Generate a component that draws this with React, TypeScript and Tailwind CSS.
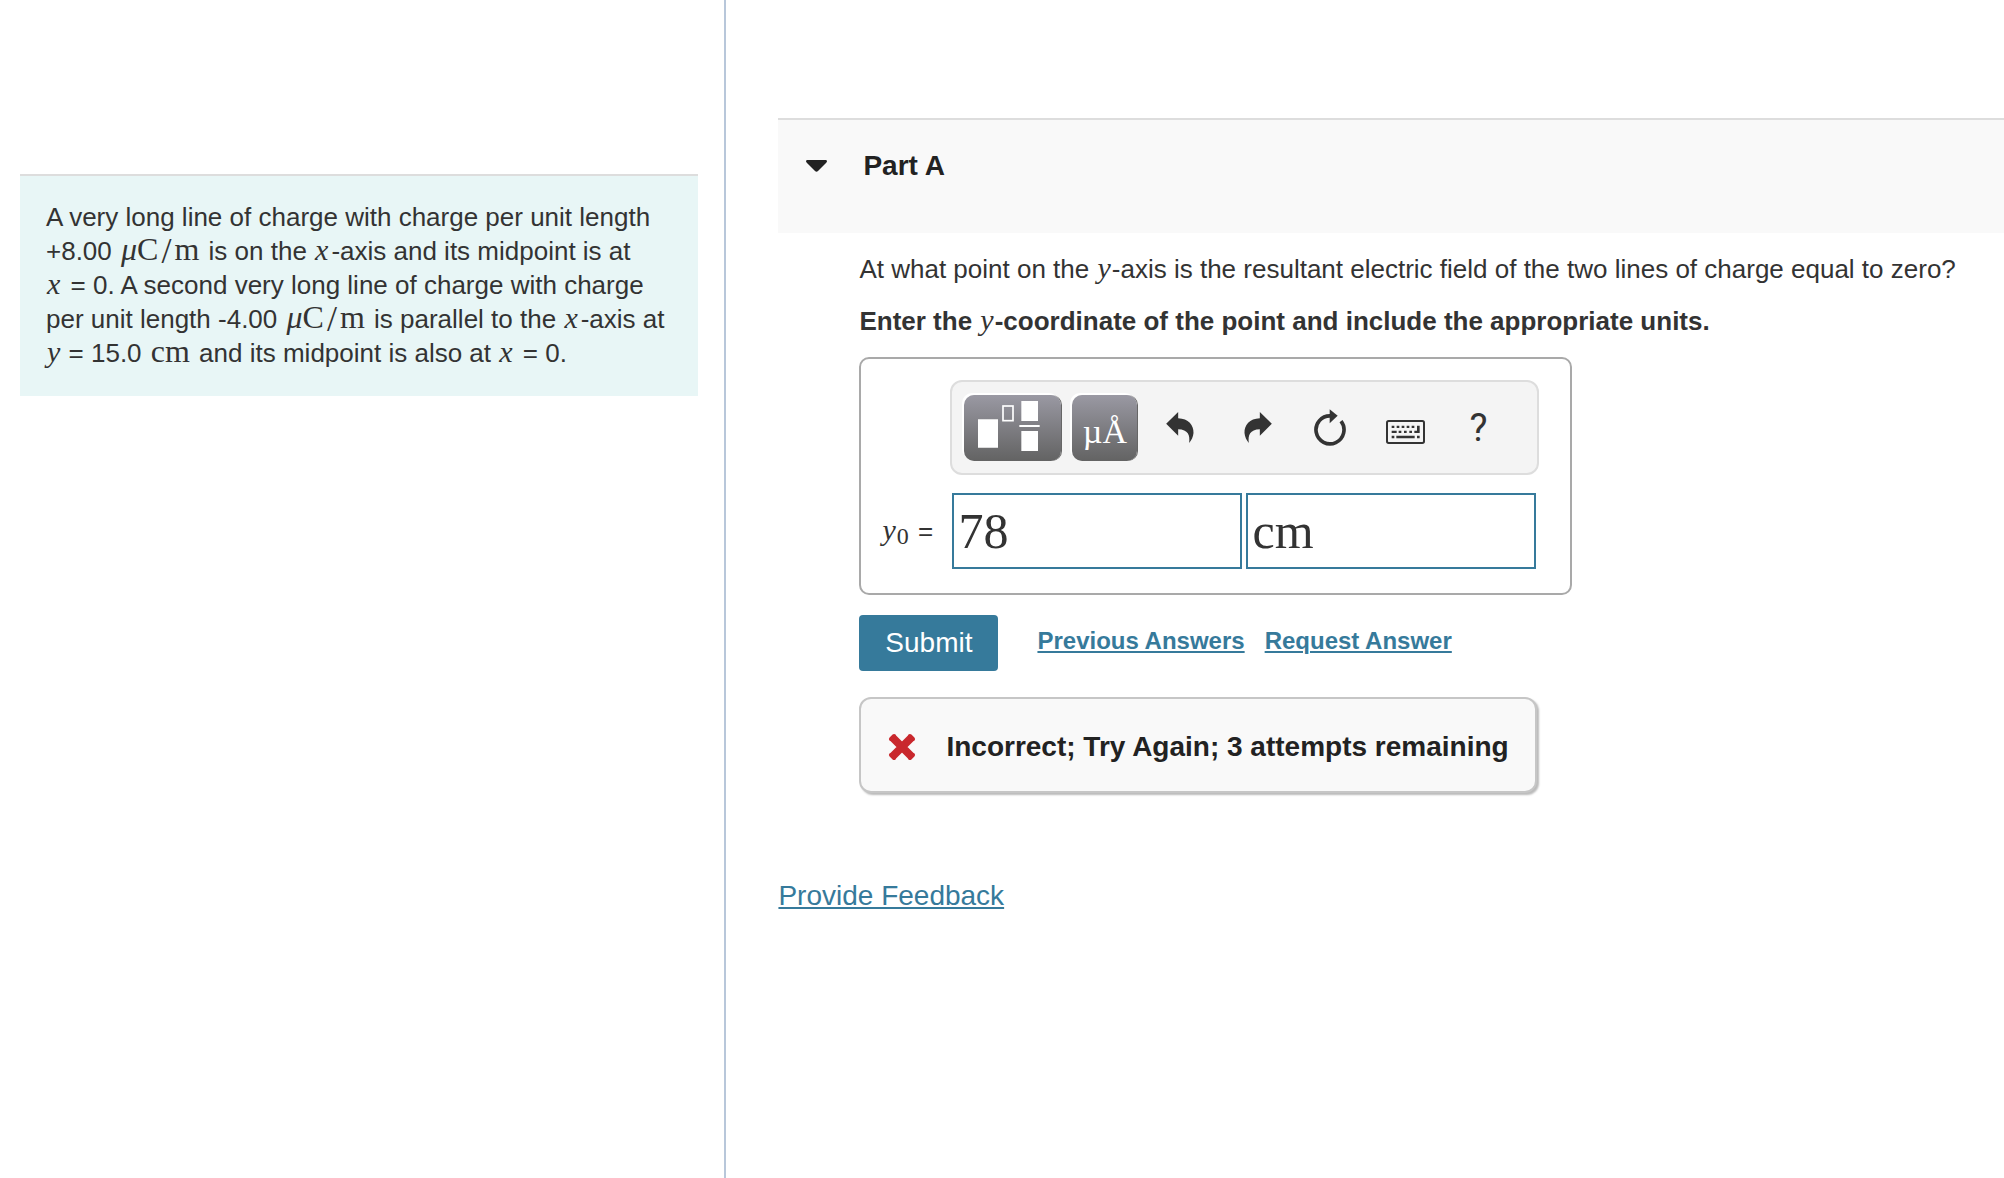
const X = () => (
  <i className="pl-px pr-[3px] font-['Liberation_Serif',serif] text-[30px] leading-[0px] font-normal">x</i>
);

const Y = () => (
  <i className="px-px font-['Liberation_Serif',serif] text-[30px] leading-[0px] font-normal">y</i>
);

const ChargeDensity = () => (
  <span className="px-0.5 font-['Liberation_Serif',serif] text-[32px] leading-[0px]">
    <i>μ</i>C<span className="px-[3px] align-[-3px] text-[36px] leading-[0px]">/</span>m
  </span>
);

const TemplateIcon = () => (
  <svg width="62" height="50" viewBox="0 0 186 150" aria-hidden="true">
    <path fill="#fff" d="M0 55h60v85H0zM130 0h50v60h-50zM124 72h61v6h-61zM130 90h50v60h-50z" />
    <rect x="75" y="15" width="30" height="44" fill="none" stroke="#fff" strokeWidth="5" />
  </svg>
);

const ArrowIcon = ({ flip }: { flip?: boolean }) => (
  <svg width="28" height="31" viewBox="0 0 83 93" className={flip ? "-scale-x-100" : ""} aria-hidden="true">
    <path fill="#333" d="M0 35 36 0v19c31 1 47 21 46 44-1 12-6 22-13 30 3-23-3-40-33-41v19z" />
  </svg>
);

const ResetIcon = () => (
  <svg width="32" height="37" viewBox="0 0 96 110" aria-hidden="true">
    <path fill="none" stroke="#333" strokeWidth="11" d="M81 36A42 42 0 1 1 50 20" />
    <path fill="#333" d="M47 0 71 20 47 42z" />
  </svg>
);

const KeyboardIcon = () => (
  <svg width="39" height="24" viewBox="0 0 117 72" aria-hidden="true">
    <rect x="3" y="3" width="111" height="66" rx="5" fill="none" stroke="#333" strokeWidth="6" />
    <path
      fill="#333"
      d="M17 17h8v7h-8zM32 17h8v7h-8zM47 17h8v7h-8zM62 17h8v7h-8zM77 17h8v7h-8zM93 17h8v22H85v-7h8zM17 32h15v7H17zM38 32h8v7h-8zM54 32h8v7h-8zM70 32h8v7h-8zM17 47h8v8h-8zM31 47h55v8H31zM93 47h8v8h-8z"
    />
  </svg>
);

const WrongIcon = () => (
  <svg width="28" height="28" viewBox="0 0 28 28" aria-hidden="true">
    <path stroke="#c9282d" strokeWidth="8" d="M4 4 24 24M24 4 4 24" />
    <path stroke="#c9282d" strokeWidth="4" strokeLinecap="round" d="M3 6 6 3M22 3 25 6M3 22 6 25M25 22 22 25" />
  </svg>
);

const keyClass =
  "flex items-center h-[66px] rounded-[10px] bg-linear-to-b from-[#9a99a3] to-[#636363] text-white shadow-[-2px_-2px_0_#fff,1px_0_0_#666]";
const inputClass =
  "h-[76px] min-w-0 flex-1 border-2 border-[#367a9b] bg-white px-1 font-['Liberation_Serif',serif] text-[50px] leading-none text-[#333] outline-none";
const linkClass = "text-[#367a9b] underline decoration-2 underline-offset-2";

const Problem = () => (
  <aside className="border-r-2 border-[#b8c7da] pl-5 pr-[26px] pt-[174px]">
    <div className="border-t-2 border-[#ddd] bg-[#e8f6f6] pl-[26px] pt-6 pb-[26px]">
      <p className="text-[26px] leading-[34px] whitespace-nowrap">
        A very long line of charge with charge per unit length
        <br />
        +8.00 <ChargeDensity /> is on the <X />-axis and its midpoint is at
        <br />
        <X /> = 0. A second very long line of charge with charge
        <br />
        per unit length -4.00 <ChargeDensity /> is parallel to the <X />-axis at
        <br />
        <Y /> = 15.0{" "}
        <span className="px-0.5 font-['Liberation_Serif',serif] text-[32px] leading-[0px]">cm</span> and its
        midpoint is also at <X /> = 0.
      </p>
    </div>
  </aside>
);

const AnswerBox = () => (
  <div className="mt-[19px] flex w-[713px] max-w-full flex-col rounded-[10px] border-2 border-[#a9a9a9] pt-[21px] pb-6 pl-5 pr-[34px]">
    <div className="ml-[69px] flex h-[95px] w-[589px] items-center rounded-xl border-2 border-[#ddd] bg-[#f4f4f4] pl-3">
      <button className={`${keyClass} w-[97px] pb-1 pl-3.5`} aria-label="Templates">
        <TemplateIcon />
      </button>
      <button className={`${keyClass} ml-[11px] w-[65px] justify-center pt-2 font-['Liberation_Serif',serif] text-[34px]`}>
        µÅ
      </button>
      <div className="ml-[29px] flex items-center gap-10">
        <button aria-label="Undo"><ArrowIcon /></button>
        <button className="ml-2.5" aria-label="Redo"><ArrowIcon flip /></button>
        <button className="ml-0.5" aria-label="Reset"><ResetIcon /></button>
        <button className="mt-2" aria-label="Keyboard shortcuts"><KeyboardIcon /></button>
        <button className="ml-1 font-[Roboto,sans-serif] text-[38px] leading-none" aria-label="Help">?</button>
      </div>
    </div>
    <div className="mt-[18px] flex items-center gap-1">
      <label htmlFor="value" className="w-[67px] whitespace-nowrap text-[26px]">
        <Y />
        <sub className="bottom-0 pr-0.5 align-[-4px] font-['Liberation_Serif',serif] text-[24px] leading-none">0</sub> =
      </label>
      <input id="value" className={inputClass} defaultValue="78" />
      <input aria-label="Units" className={inputClass} defaultValue="cm" />
    </div>
  </div>
);

export default function App() {
  return (
    <div className="grid min-h-screen grid-cols-[29fr_51fr] bg-white font-['Liberation_Sans',Arial,sans-serif] text-[#333]">
      <Problem />
      <main className="min-w-0 pl-[52px] pt-[118px]">
        <header className="h-[115px] border-t-2 border-[#ddd] bg-[#f9f9f9] pl-7 pt-7">
          <button className="flex items-center gap-9 text-[#222]">
            <svg width="21" height="12" viewBox="0 0 21 12" aria-hidden="true">
              <path fill="#222" d="M1 0h19q2 1 0 3l-8 8q-1.500 1.500-3 0L1 3q-2-2 0-3z" />
            </svg>
            <h2 className="text-[28px] leading-9 font-bold">Part A</h2>
          </button>
        </header>

        <section className="pl-[81px] pt-[19px]">
          <p className="text-[26px] leading-[34px]">
            At what point on the <Y />-axis is the resultant electric field of the two lines of charge equal to zero?
          </p>
          <p className="mt-[18px] text-[26px] leading-[34px] font-bold">
            Enter the <Y />-coordinate of the point and include the appropriate units.
          </p>

          <AnswerBox />

          <div className="mt-5 flex items-center">
            <button className="h-14 w-[139px] rounded bg-[#367a9b] text-[28px] text-white">Submit</button>
            <a href="#" className={`${linkClass} ml-[39px] mb-1 text-[24px] font-bold`}>Previous Answers</a>
            <a href="#" className={`${linkClass} ml-5 mb-1 text-[24px] font-bold`}>Request Answer</a>
          </div>

          <div className="mt-[26px] flex h-[96px] w-[678px] max-w-full items-center gap-[30px] rounded-xl border-2 border-[#c6c6c6] bg-[#f9f9f9] pl-[27px] pt-1 shadow-[2px_2px_2px_#bbb]">
            <WrongIcon />
            <p className="text-[28px] font-bold text-[#222]">Incorrect; Try Again; 3 attempts remaining</p>
          </div>
        </section>

        <a href="#" className={`${linkClass} mt-[85px] inline-block text-[28px] leading-9`}>Provide Feedback</a>
      </main>
    </div>
  );
}
